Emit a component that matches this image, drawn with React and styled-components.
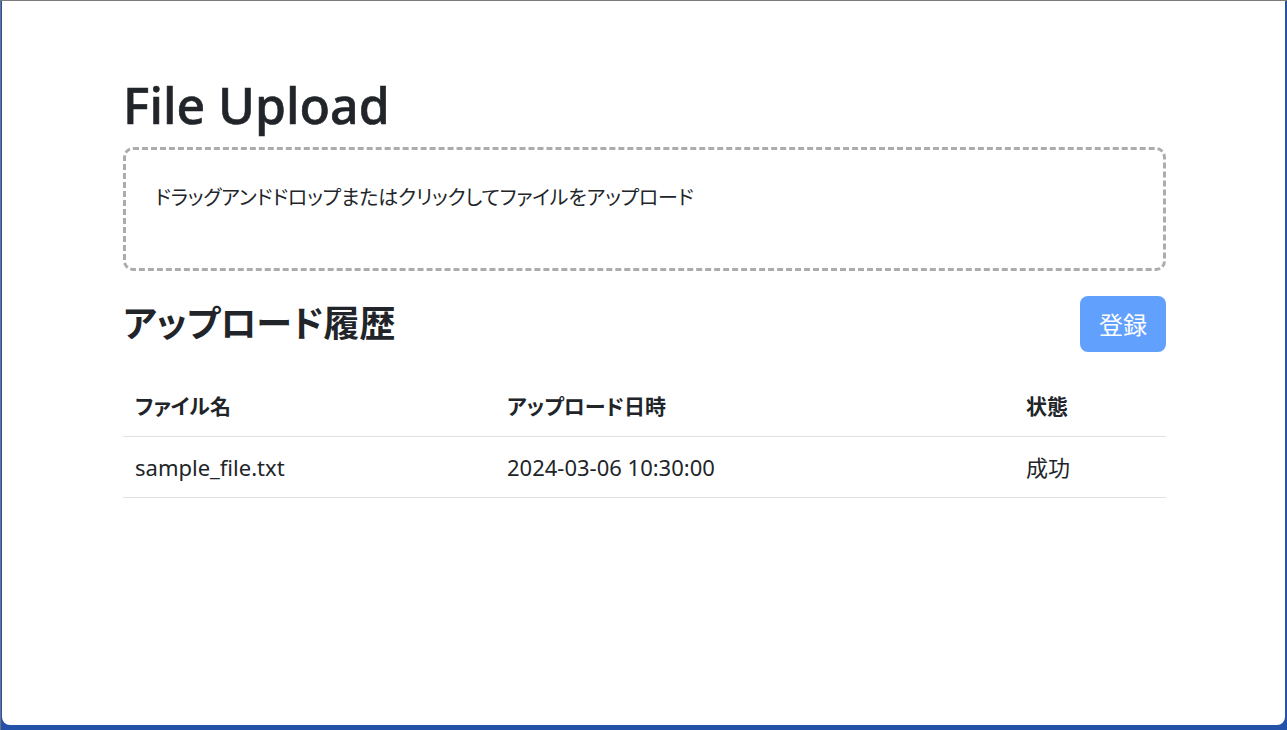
import React from "react";
import styled, { createGlobalStyle } from "styled-components";

const GlobalStyle = createGlobalStyle`
    html, body {
        margin: 0;
        padding: 0;
        background: #ffffff;
    }
    body {
        font-family: "Noto Sans", "Noto Sans CJK JP", sans-serif;
        color: #212529;
    }
`;

const Frame = styled.div`
    width: 1287px;
    height: 730px;
    box-sizing: border-box;
    background: #2352a8;
    border-top: 1px solid #7b7b7b;
    border-left: 1px solid #6c7382;
    padding: 0 2px 5px 1px;
`;

const Window = styled.div`
    height: 100%;
    background: #ffffff;
    border-radius: 0 0 8px 8px;
`;

const Container = styled.main`
    width: 1043px;
    padding: 74px 0 0 121px;
`;

const Title = styled.h1`
    margin: 0 0 12px;
    font-size: 50px;
    font-weight: 500;
    line-height: 60px;
    -webkit-text-stroke: 0.6px #212529;
`;

const DropZone = styled.div`
    box-sizing: border-box;
    min-height: 124px;
    padding: 33px 29px 31px;
    border: 3px dashed #acacac;
    border-radius: 10px;
    cursor: pointer;

    p {
        margin: 0;
        font-size: 20px;
        line-height: 30px;
        letter-spacing: -0.17px;
        font-feature-settings: "palt";
    }
`;

const HistoryHeader = styled.div`
    display: flex;
    align-items: center;
    justify-content: space-between;
    margin: 25px 0 24px;
`;

const SubTitle = styled.h2`
    margin: 0;
    font-size: 36px;
    font-weight: 700;
    line-height: 1.2;
    font-feature-settings: "palt";
`;

const Button = styled.button`
    height: 56px;
    padding: 0 19px;
    border: none;
    border-radius: 8px;
    background: #62a0fe;
    color: #ffffff;
    font-family: "Noto Sans CJK JP", sans-serif;
    font-size: 24px;
    line-height: 1;
`;

const Table = styled.table`
    width: 100%;
    border-collapse: collapse;
    table-layout: fixed;

    th,
    td {
        padding: 15px 12px;
        border-bottom: 1px solid #dee2e6;
        text-align: left;
        line-height: 30px;
        font-feature-settings: "palt";
    }

    th {
        font-size: 21px;
        font-weight: 700;
    }

    td {
        font-size: 22px;
    }
`;

const Col = styled.col`
    width: ${(p) => p.$w}px;
`;

const history = [
    { name: "sample_file.txt", date: "2024-03-06 10:30:00", status: "成功" },
];

const App = () => {
    return (
        <Frame>
            <GlobalStyle />
            <Window>
                <Container>
                    <Title>File Upload</Title>
                    <DropZone>
                        <p>ドラッグアンドドロップまたはクリックしてファイルをアップロード</p>
                    </DropZone>
                    <HistoryHeader>
                        <SubTitle>アップロード履歴</SubTitle>
                        <Button disabled>登録</Button>
                    </HistoryHeader>
                    <Table>
                        <colgroup>
                            <Col $w={372} />
                            <Col $w={519} />
                            <Col $w={152} />
                        </colgroup>
                        <thead>
                            <tr>
                                <th>ファイル名</th>
                                <th>アップロード日時</th>
                                <th>状態</th>
                            </tr>
                        </thead>
                        <tbody>
                            {history.map((row) => (
                                <tr key={row.name}>
                                    <td>{row.name}</td>
                                    <td>{row.date}</td>
                                    <td>{row.status}</td>
                                </tr>
                            ))}
                        </tbody>
                    </Table>
                </Container>
            </Window>
        </Frame>
    );
};

export default App;
